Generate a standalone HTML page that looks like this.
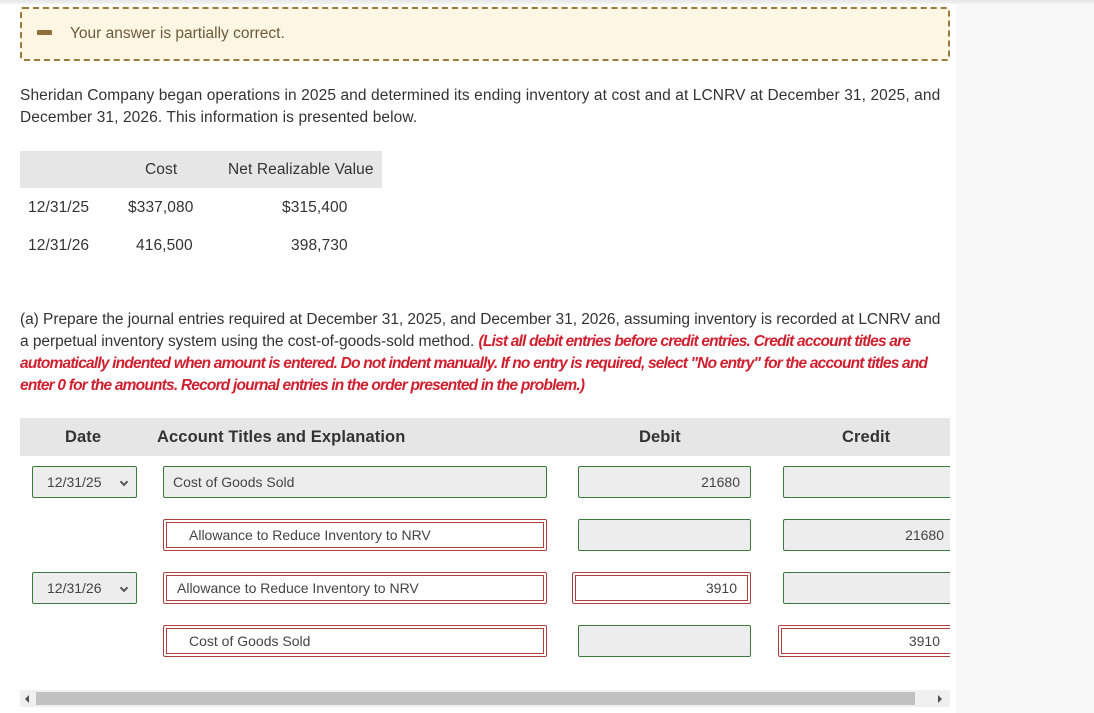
<!DOCTYPE html>
<html><head><meta charset="utf-8"><style>
*{box-sizing:border-box;margin:0;padding:0}
body{width:1094px;height:713px;overflow:hidden;background:#f8f8f8;font-family:"Liberation Sans",sans-serif;color:#333;position:relative}
#main{position:absolute;left:0;top:0;width:956px;height:713px;background:#fff}
#topbar{position:absolute;left:0;top:0;width:1094px;height:4px;background:linear-gradient(#e6e6e6,#f4f4f4)}
.a{position:absolute}
#notice{left:20px;top:7px;width:930px;height:54px;background:#fdf6e3;border:2px dashed #9a7a3e;border-radius:3px}
#notice .dash{position:absolute;left:15px;top:21px;width:15px;height:5px;background:#8e6f3a;border-radius:1px}
#notice .t{position:absolute;left:48px;top:16px;font-size:15.5px;color:#6b5a3a}
.p{font-size:15.5px;line-height:22px;letter-spacing:0.1px;color:#333}
.red{color:#d0202f;font-style:italic;font-weight:bold;letter-spacing:-0.8px}
.b{font-weight:bold;font-size:16.5px;letter-spacing:0.1px}
.hdr{background:#e6e6e6}
.box{position:absolute;height:32px;border:1px solid #3c7a3c;background:#ededed;border-radius:2px;font-size:14px;color:#444;line-height:30px}
.bad{position:absolute;height:32px;border:1px solid #b04040;background:#fff;border-radius:2px;padding:2px}
.bad div{border:1px solid #b04040;height:26px;line-height:24px;font-size:14px;color:#444}
.r{text-align:right}
.chev{position:absolute;right:9px;top:12px;width:6px;height:6px;border-right:2px solid #555;border-bottom:2px solid #555;transform:rotate(45deg)}
</style></head><body>
<div id="main"></div>
<div id="topbar"></div>
<div id="notice" class="a"><div class="dash"></div><div class="t">Your answer is partially correct.</div></div>
<div class="a p" style="left:20px;top:85px;width:930px">Sheridan Company began operations in 2025 and determined its ending inventory at cost and at LCNRV at December 31, 2025, and December 31, 2026. This information is presented below.</div>
<div class="a hdr" style="left:20px;top:151px;width:362px;height:37px"></div>
<div class="a p" style="left:145px;top:159px">Cost</div>
<div class="a p" style="left:228px;top:159px">Net Realizable Value</div>
<div class="a p" style="left:28px;top:197px">12/31/25</div>
<div class="a p" style="left:128px;top:197px">$337,080</div>
<div class="a p" style="left:282px;top:197px">$315,400</div>
<div class="a p" style="left:28px;top:235px">12/31/26</div>
<div class="a p" style="left:136px;top:235px">416,500</div>
<div class="a p" style="left:291px;top:235px">398,730</div>
<div class="a p" style="left:20px;top:309px;width:935px;letter-spacing:-0.05px">(a) Prepare the journal entries required at December 31, 2025, and December 31, 2026, assuming inventory is recorded at LCNRV and<br>a perpetual inventory system using the cost-of-goods-sold method. <span class="red">(List all debit entries before credit entries. Credit account titles are automatically indented when amount is entered. Do not indent manually. If no entry is required, select "No entry" for the account titles and enter 0 for the amounts. Record journal entries in the order presented in the problem.)</span></div>
<div class="a hdr" style="left:20px;top:418px;width:930px;height:38px"></div>
<div class="a p b" style="left:65px;top:426px">Date</div>
<div class="a p b" style="left:157px;top:426px">Account Titles and Explanation</div>
<div class="a p b" style="left:639px;top:426px">Debit</div>
<div class="a p b" style="left:842px;top:426px">Credit</div>

<div class="box" style="left:32px;top:466px;width:105px;padding-left:14px">12/31/25<span class="chev"></span></div>
<div class="box" style="left:163px;top:466px;width:384px;padding-left:9px">Cost of Goods Sold</div>
<div class="box r" style="left:578px;top:466px;width:173px;padding-right:10px">21680</div>

<div class="bad" style="left:163px;top:519px;width:384px"><div style="padding-left:22px">Allowance to Reduce Inventory to NRV</div></div>
<div class="box" style="left:578px;top:519px;width:173px"></div>

<div class="box" style="left:32px;top:572px;width:105px;padding-left:14px">12/31/26<span class="chev"></span></div>
<div class="bad" style="left:163px;top:572px;width:384px"><div style="padding-left:10px">Allowance to Reduce Inventory to NRV</div></div>
<div class="bad" style="left:572px;top:572px;width:179px"><div class="r" style="padding-right:10px">3910</div></div>

<div class="bad" style="left:163px;top:625px;width:384px"><div style="padding-left:22px">Cost of Goods Sold</div></div>
<div class="box" style="left:578px;top:625px;width:173px"></div>

<div class="a" style="left:0;top:0;width:950px;height:713px;overflow:hidden">
<div class="box" style="left:783px;top:466px;width:180px"></div>
<div class="box" style="left:783px;top:519px;width:180px"><span style="position:absolute;right:18px">21680</span></div>
<div class="box" style="left:783px;top:572px;width:180px"></div>
<div class="bad" style="left:778px;top:625px;width:185px"><div class="r" style="padding-right:19px">3910</div></div>
</div>

<div class="a" style="left:20px;top:690px;width:930px;height:17px;background:#f0f0f0"></div>
<div class="a" style="left:36px;top:692px;width:879px;height:13px;background:#c1c1c1"></div>
<div class="a" style="left:25px;top:695px;width:0;height:0;border-top:4px solid transparent;border-bottom:4px solid transparent;border-right:4px solid #505050"></div>
<div class="a" style="left:938px;top:695px;width:0;height:0;border-top:4px solid transparent;border-bottom:4px solid transparent;border-left:4px solid #505050"></div>
</body></html>
